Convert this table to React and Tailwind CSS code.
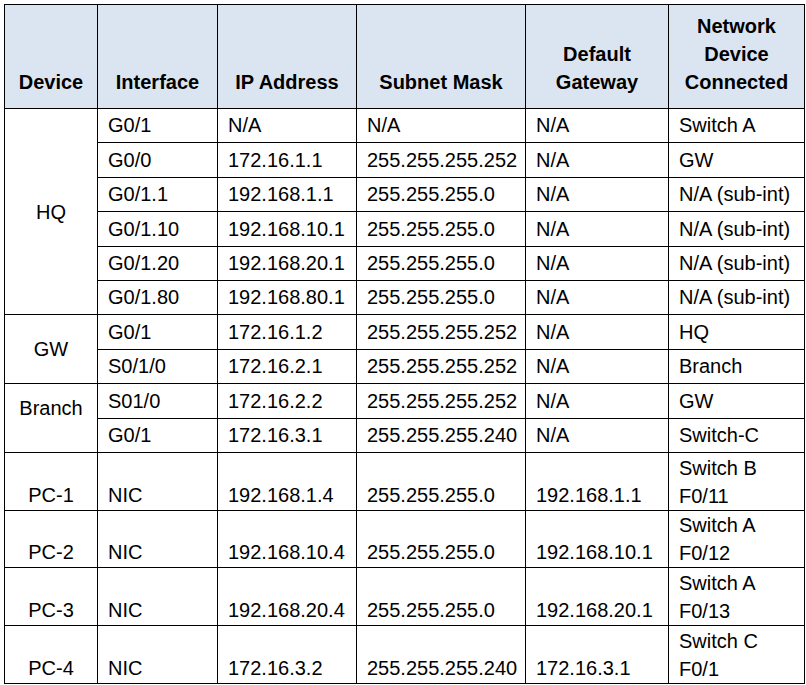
import React from "react";

const rows = [
  { dev: "HQ", span: 6, cells: ["G0/1", "N/A", "N/A", "N/A", "Switch A"] },
  { cells: ["G0/0", "172.16.1.1", "255.255.255.252", "N/A", "GW"] },
  { cells: ["G0/1.1", "192.168.1.1", "255.255.255.0", "N/A", "N/A (sub-int)"] },
  { cells: ["G0/1.10", "192.168.10.1", "255.255.255.0", "N/A", "N/A (sub-int)"] },
  { cells: ["G0/1.20", "192.168.20.1", "255.255.255.0", "N/A", "N/A (sub-int)"] },
  { cells: ["G0/1.80", "192.168.80.1", "255.255.255.0", "N/A", "N/A (sub-int)"] },
  { dev: "GW", span: 2, cells: ["G0/1", "172.16.1.2", "255.255.255.252", "N/A", "HQ"] },
  { cells: ["S0/1/0", "172.16.2.1", "255.255.255.252", "N/A", "Branch"] },
  { dev: "Branch", span: 2, shift: true, cells: ["S01/0", "172.16.2.2", "255.255.255.252", "N/A", "GW"] },
  { cells: ["G0/1", "172.16.3.1", "255.255.255.240", "N/A", "Switch-C"] },
];

const pcs = [
  ["PC-1", "NIC", "192.168.1.4", "255.255.255.0", "192.168.1.1", "Switch B", "F0/11"],
  ["PC-2", "NIC", "192.168.10.4", "255.255.255.0", "192.168.10.1", "Switch A", "F0/12"],
  ["PC-3", "NIC", "192.168.20.4", "255.255.255.0", "192.168.20.1", "Switch A", "F0/13"],
  ["PC-4", "NIC", "172.16.3.2", "255.255.255.240", "172.16.3.1", "Switch C", "F0/1"],
];

const th = "border border-black align-bottom text-center font-bold px-[6px] pb-[12px] leading-[28px]";
const td = "border border-black align-bottom pl-[10px] pr-[4px] pb-[3px] leading-[28px] whitespace-nowrap";
const pc = "border border-black align-bottom pl-[10px] pb-[1px] leading-[28px] whitespace-nowrap";

export default function App() {
  return (
    <div className="bg-white min-h-[685px] pl-[4px] pt-[4px] text-black font-['Liberation_Sans',Arial,sans-serif] text-[20px]">
      <table className="border-collapse table-fixed w-[800px]">
        <colgroup>
          <col className="w-[93px]" />
          <col className="w-[120px]" />
          <col className="w-[139px]" />
          <col className="w-[169px]" />
          <col className="w-[143px]" />
          <col className="w-[136px]" />
        </colgroup>
        <thead>
          <tr className="h-[104px] bg-[#dbe5f1]">
            <th className={th}>Device</th>
            <th className={th}>Interface</th>
            <th className={th}>IP Address</th>
            <th className={th}>Subnet Mask</th>
            <th className={th}>Default<br />Gateway</th>
            <th className={th}>Network<br />Device<br />Connected</th>
          </tr>
        </thead>
        <tbody>
          {rows.map((r, i) => (
            <tr key={i} className="h-[34.4px]">
              {r.dev && (
                <td
                  rowSpan={r.span}
                  className={`border border-black align-middle text-center leading-[28px] ${r.shift ? "pb-[20px]" : ""}`}
                >
                  {r.dev}
                </td>
              )}
              {r.cells.map((c, j) => (
                <td key={j} className={td}>{c}</td>
              ))}
            </tr>
          ))}
          {pcs.map((p, i) => (
            <tr key={i} className="h-[57.75px]">
              <td className="border border-black align-bottom text-center pb-[1px] leading-[28px]">{p[0]}</td>
              <td className={pc}>{p[1]}</td>
              <td className={pc}>{p[2]}</td>
              <td className={pc}>{p[3]}</td>
              <td className={pc}>{p[4]}</td>
              <td className="border border-black align-bottom pl-[10px] pb-0 leading-[28px] whitespace-nowrap">
                {p[5]}
                <br />
                {p[6]}
              </td>
            </tr>
          ))}
        </tbody>
      </table>
    </div>
  );
}
